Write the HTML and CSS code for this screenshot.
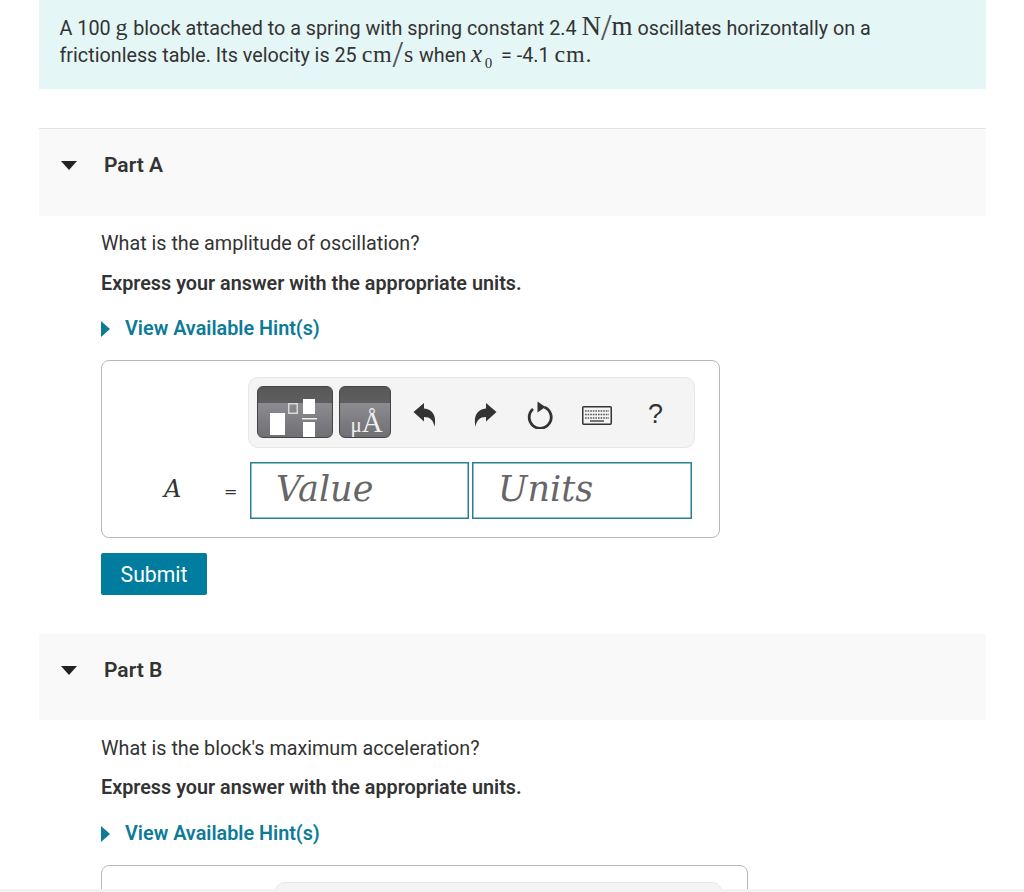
FILE: index.html
```html
<!DOCTYPE html>
<html>
<head>
    <meta charset="utf-8" />
    <link rel="stylesheet" href="styles.css">
</head>
<body>
    <div class="page">
        <section class="intro">
            A 100 <span class="math">g</span> block attached to a spring with spring constant 2.4 <span class="math big">N<span class="slash">/</span>m</span> oscillates horizontally on a
            frictionless table. Its velocity is 25 <span class="math">cm<span class="slash">/</span>s</span> when <span class="math"><i>x</i><sub>0</sub></span> = -4.1 <span class="math">cm.</span>
        </section>

        <section class="part part-a">
            <header class="part-head">
                <span class="caret-down"></span>
                <h2>Part A</h2>
            </header>
            <div class="part-body">
                <p class="question">What is the amplitude of oscillation?</p>
                <p class="instruction">Express your answer with the appropriate units.</p>
                <a class="hint"><span class="caret-right"></span>View Available Hint(s)</a>

                <div class="answer-box">
                    <div class="toolbar">
                        <div class="tool-btn templates">
                            <svg width="76" height="52" viewBox="0 0 76 52">
                                <rect x="13" y="27" width="15" height="22" fill="#fff" />
                                <rect x="31.75" y="17.75" width="8.5" height="9.5" fill="none" stroke="#d8d8d8" stroke-width="1.5" />
                                <rect x="46" y="13" width="12" height="15" fill="#fff" />
                                <rect x="45" y="32" width="15" height="1.5" fill="#eee" />
                                <rect x="46" y="36" width="12" height="15" fill="#fff" />
                            </svg>
                        </div>
                        <div class="tool-btn symbols"><span class="mu">μ</span><span class="ang">Å</span></div>
                        <svg class="icon undo" width="24" height="26" viewBox="0 0 24 26">
                            <path d="M0.5 10 L11 1 L11 6.5 C19 7 24 13 21.5 25 C20.5 18 17 15 11 15 L11 19.5 Z" fill="#333" />
                        </svg>
                        <svg class="icon redo" width="24" height="26" viewBox="0 0 24 26">
                            <path d="M23.5 10 L13 1 L13 6.5 C5 7 0 13 2.5 25 C3.5 18 7 15 13 15 L13 19.5 Z" fill="#333" />
                        </svg>
                        <svg class="icon reset" width="26" height="28" viewBox="0 0 26 28">
                            <path d="M6 8 A11 11 0 1 0 17.5 6.2" fill="none" stroke="#333" stroke-width="2.8" />
                            <path d="M10.500 0.500 L18.500 6 L10.500 11.500 Z" fill="#333" />
                        </svg>
                        <svg class="icon keyboard" width="30" height="19" viewBox="0 0 30 19">
                            <rect x="0.75" y="0.75" width="28.5" height="17.5" rx="1" fill="#f4f4f4" stroke="#333" stroke-width="1.5" />
                            <path d="M3 5 H27 M3 8.5 H27 M3 12 H27" stroke="#555" stroke-width="1.6" stroke-dasharray="1.6 1" />
                            <path d="M8 15 H22" stroke="#555" stroke-width="1.6" />
                        </svg>
                        <span class="help">?</span>
                    </div>

                    <div class="answer-row">
                        <span class="var">A</span>
                        <span class="equals">=</span>
                        <div class="field value">Value</div>
                        <div class="field units">Units</div>
                    </div>
                </div>

                <button class="submit">Submit</button>
            </div>
        </section>

        <section class="part part-b">
            <header class="part-head">
                <span class="caret-down"></span>
                <h2>Part B</h2>
            </header>
            <div class="part-body">
                <p class="question">What is the block's maximum acceleration?</p>
                <p class="instruction">Express your answer with the appropriate units.</p>
                <a class="hint"><span class="caret-right"></span>View Available Hint(s)</a>

                <div class="answer-box wide">
                    <div class="toolbar"></div>
                </div>
            </div>
        </section>

        <div class="bottom-strip"></div>
    </div>
</body>
</html>
```

FILE: styles.css
```css
* {
    padding: 0;
    margin: 0;
    box-sizing: border-box;
}

body {
    background-color: white;
    color: #333;
    font-family: Roboto, sans-serif;
    font-size: 19.75px;
    overflow: hidden;
}

.page {
    position: relative;
    height: 892px;
    padding: 0 38px 0 39px;
    overflow: hidden;
}

.intro {
    height: 89px;
    padding: 15px 20px 0 20.5px;
    line-height: 27px;
    background-color: #e5f6f6;
}

.math {
    font-family: "Liberation Serif", serif;
    font-size: 24px;
    letter-spacing: 0.8px;
    line-height: 0;
}

.math i {
    font-size: 25px;
}

.math.big {
    font-size: 27px;
    letter-spacing: 0;
}

.math sub {
    font-size: 15px;
    margin: 0 3px 0 2px;
    line-height: 0;
}

.slash {
    color: #555;
    font-size: 38px;
    font-weight: 300;
    line-height: 0;
    vertical-align: -5px;
}

.part-a {
    margin-top: 39px;
}

.part-b {
    margin-top: 39px;
}

.part-head {
    display: flex;
    align-items: flex-start;
    height: 88px;
    padding: 23px 0 0 22px;
    background-color: #f9f9f9;
    border-top: 1px solid #e4e4e4;
}

.part-b .part-head {
    height: 86px;
    border-top: 0;
    padding-top: 23px;
}

.part-head h2 {
    font-size: 21px;
    font-weight: 600;
    line-height: 27px;
    margin-left: 27px;
}

.caret-down {
    width: 0;
    height: 0;
    margin-top: 9px;
    border-left: 8px solid transparent;
    border-right: 8px solid transparent;
    border-top: 9px solid #222;
}

.part-body {
    padding: 14px 0 0 62px;
}

.part-b .part-body {
    padding-top: 15px;
}

.question {
    line-height: 27px;
}

.instruction {
    margin-top: 13px;
    font-size: 19.8px;
    font-weight: 600;
    line-height: 27px;
}

.part-b .instruction {
    margin-top: 12px;
}

.hint {
    display: flex;
    align-items: center;
    margin-top: 18px;
    color: #0d7b98;
    font-size: 19.8px;
    font-weight: 600;
    line-height: 27px;
}

.part-b .hint {
    margin-top: 19px;
}

.caret-right {
    width: 0;
    height: 0;
    margin-right: 15px;
    border-top: 8px solid transparent;
    border-bottom: 8px solid transparent;
    border-left: 9px solid #0d7b98;
}

.answer-box {
    width: 619px;
    height: 178px;
    margin-top: 18px;
    padding: 16px 24px 0 146px;
    background-color: white;
    border: 1px solid #b8b8b8;
    border-radius: 8px;
}

.answer-box.wide {
    width: 647px;
    height: 120px;
    padding-left: 173px;
}

.toolbar {
    display: flex;
    align-items: center;
    width: 447px;
    height: 71px;
    padding-left: 8px;
    background-color: #f4f4f4;
    border: 1px solid #e6e6e6;
    border-radius: 10px;
}

.tool-btn {
    height: 52px;
    margin-top: -2px;
    overflow: hidden;
    background: linear-gradient(#585858 0, #5e5e5e 32%, #8c8c90 33%, #707074 100%);
    border: 1px solid #444;
    border-radius: 6px;
}

.templates {
    width: 76px;
}

.templates svg {
    display: block;
    margin: -1px;
}

.symbols {
    display: flex;
    align-items: flex-end;
    justify-content: center;
    width: 52px;
    margin-left: 6px;
    padding-left: 3px;
    color: #f0f0f0;
    font-family: "Liberation Serif", serif;
    line-height: 1;
}

.mu {
    font-size: 21px;
    margin-bottom: 1px;
}

.ang {
    font-size: 29px;
}

.icon {
    flex: none;
    margin-top: 5px;
}

.undo {
    margin-left: 22px;
}

.redo {
    margin-left: 36px;
}

.reset {
    margin-left: 30px;
}

.keyboard {
    margin-left: 29px;
    margin-top: 6px;
}

.help {
    margin-left: 36px;
    color: #333;
    font-family: "Liberation Sans", sans-serif;
    font-size: 27px;
    margin-top: 3px;
}

.answer-row {
    display: flex;
    align-items: center;
    height: 57px;
    margin: 14px 0 0 -146px;
}

.var {
    width: 70px;
    margin-left: 62px;
    margin-top: -4px;
    color: #333;
    font-family: "DejaVu Serif", serif;
    font-size: 24px;
    font-style: italic;
}

.equals {
    width: 26px;
    margin-left: -10px;
    color: #333;
    font-family: "DejaVu Sans", sans-serif;
    font-size: 16px;
    margin-top: 2px;
}

.field {
    height: 57px;
    padding-left: 25px;
    border: 1px solid #2a7f96;
    box-shadow: inset 0 0 0 0.5px #2a7f96;
    color: #666;
    font-family: "DejaVu Serif", serif;
    font-size: 35px;
    font-style: italic;
    line-height: 53px;
}

.field.value {
    width: 219px;
}

.field.units {
    width: 220px;
    margin-left: 3px;
}

.submit {
    display: block;
    width: 106px;
    height: 42px;
    margin-top: 15px;
    color: white;
    background-color: #007c9e;
    border: 0;
    border-radius: 2px;
    font-family: Roboto, sans-serif;
    font-size: 21.2px;
}

.bottom-strip {
    position: absolute;
    left: 0;
    right: 0;
    bottom: 0;
    height: 3px;
    background-color: #f2f2f2;
}
```
